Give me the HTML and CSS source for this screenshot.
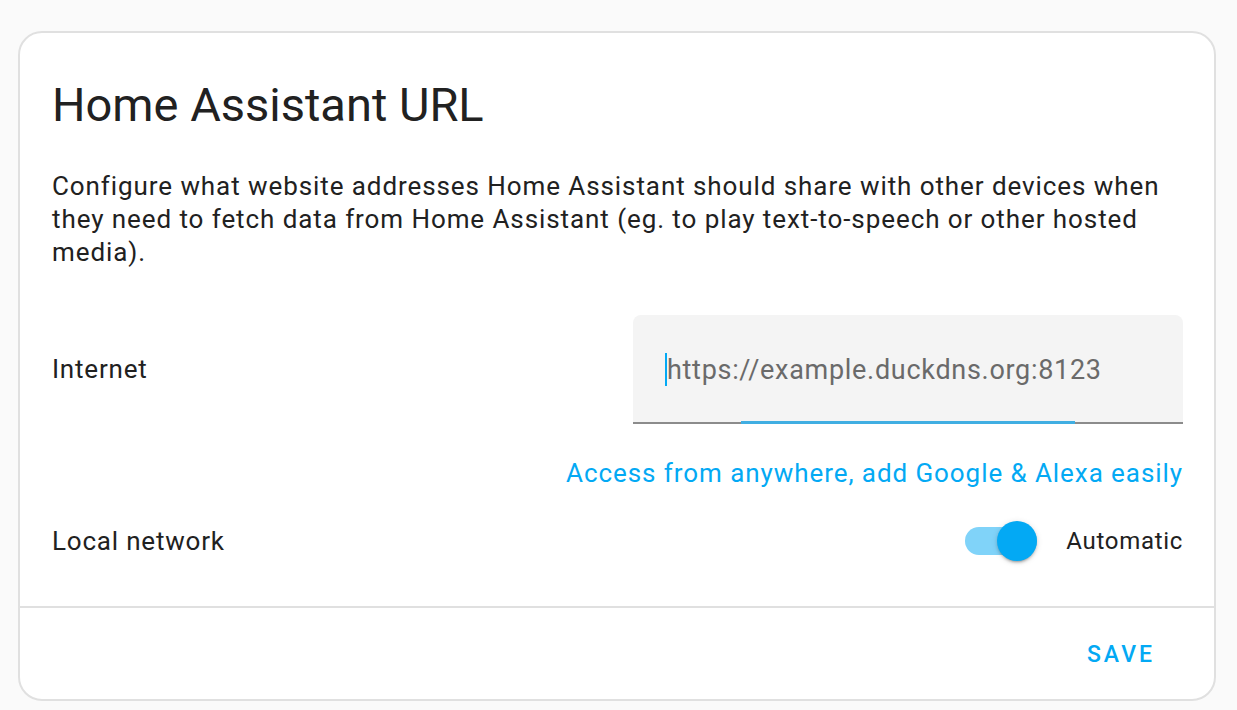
FILE: index.html
```html
<!DOCTYPE html>
<html lang="en">
<head>
    <meta charset="UTF-8">
    <meta name="viewport" content="width=device-width, initial-scale=1.0">
    <title>Home Assistant URL</title>
    <link rel="stylesheet" href="styles.css">
</head>
<body>
    <div class="card">
        <div class="card-content">
            <h1 class="card-title">Home Assistant URL</h1>
            <p class="description">Configure what website addresses Home Assistant should share with other devices when they need to fetch data from Home Assistant (eg. to play text-to-speech or other hosted media).</p>

            <div class="row row-internet">
                <span class="row-label">Internet</span>
                <div class="field">
                    <span class="caret"></span>
                    <span class="placeholder">https://example.duckdns.org:8123</span>
                </div>
            </div>

            <div class="link-row">
                <a href="#" class="cloud-link">Access from anywhere, add Google &amp; Alexa easily</a>
            </div>

            <div class="row row-local">
                <span class="row-label">Local network</span>
                <div class="switch-wrap">
                    <div class="switch">
                        <span class="track"></span>
                        <span class="thumb"></span>
                    </div>
                    <span class="switch-label">Automatic</span>
                </div>
            </div>
        </div>
        <div class="card-actions">
            <button type="button" class="save-button">Save</button>
        </div>
    </div>
</body>
</html>
```

FILE: styles.css
```css
body {
    font-family: Roboto, "Noto Sans", sans-serif;
    background-color: #fafafa;
    margin: 0;
    padding: 31px 21px 0 18px;
    color: #212121;
}

.card {
    background: #fff;
    border: 2px solid #e0e0e0;
    border-radius: 24px;
    height: 670px;
    box-sizing: border-box;
    display: flex;
    flex-direction: column;
}

.card-content {
    padding: 40px 31px 0 32px;
    flex: 1;
}

.card-title {
    font-size: 47px;
    font-weight: 400;
    line-height: 64px;
    margin: 0;
}

.description {
    font-size: 26px;
    letter-spacing: 0.92px;
    line-height: 33px;
    margin: 33px 0 0 0;
}

.row {
    display: flex;
    align-items: center;
    justify-content: space-between;
}

.row-label {
    font-size: 26px;
    letter-spacing: 0.8px;
    line-height: 33px;
}

.row-internet {
    margin-top: 46px;
}

.field {
    position: relative;
    width: 550px;
    height: 109px;
    box-sizing: border-box;
    background: #f4f4f4;
    border-radius: 8px 8px 0 0;
    border-bottom: 2px solid #8c8c8c;
    display: flex;
    align-items: center;
    padding-left: 32px;
}

.field::after {
    content: "";
    position: absolute;
    left: 108px;
    width: 334px;
    bottom: -2px;
    height: 3px;
    background: #40aee2;
}

.caret {
    width: 2px;
    height: 33px;
    background: #03a9f4;
    margin-top: 2px;
}

.placeholder {
    font-size: 27px;
    letter-spacing: 0.7px;
    color: #6a6a6a;
    margin-top: 2px;
}

.link-row {
    display: flex;
    justify-content: flex-end;
    margin-top: 33px;
}

.cloud-link {
    font-size: 26px;
    letter-spacing: 0.93px;
    line-height: 33px;
    color: #03a9f4;
    text-decoration: none;
}

.row-local {
    margin-top: 31px;
}

.switch-wrap {
    display: flex;
    align-items: center;
    gap: 29px;
}

.switch {
    position: relative;
    width: 72px;
    height: 40px;
    display: flex;
    align-items: center;
}

.track {
    width: 72px;
    height: 28px;
    border-radius: 14px;
    background: #80d3f9;
}

.thumb {
    position: absolute;
    right: 0;
    top: 0;
    width: 40px;
    height: 40px;
    border-radius: 50%;
    background: #03a9f4;
    box-shadow: 0 3px 2px -2px rgba(0, 0, 0, 0.2), 0 2px 3px 0 rgba(0, 0, 0, 0.14), 0 1px 6px 0 rgba(0, 0, 0, 0.12);
}

.switch-label {
    font-size: 24px;
    letter-spacing: 0.7px;
    line-height: 33px;
}

.card-actions {
    border-top: 2px solid #e0e0e0;
    height: 93px;
    box-sizing: border-box;
    display: flex;
    align-items: center;
    justify-content: flex-end;
    padding-right: 47px;
    padding-top: 2px;
}

.save-button {
    background: none;
    border: none;
    font-family: Roboto, "Noto Sans", sans-serif;
    font-size: 23px;
    font-weight: 500;
    letter-spacing: 3px;
    text-transform: uppercase;
    color: #03a9f4;
    padding: 10px 12px 10px 16px;
    cursor: pointer;
}
```
